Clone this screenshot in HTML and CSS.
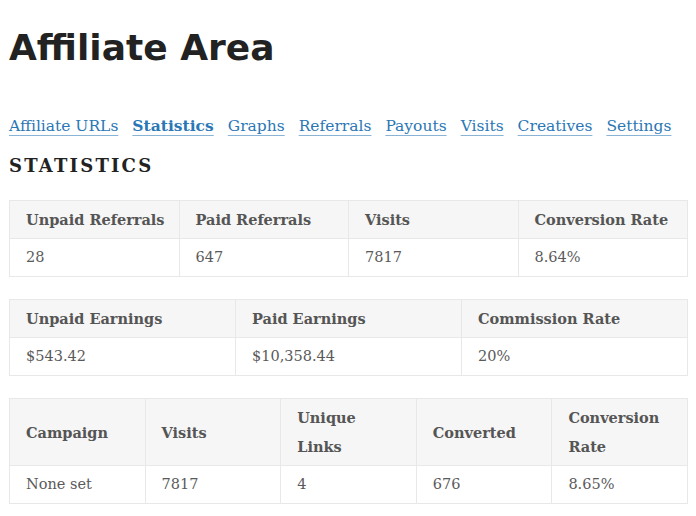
FILE: index.html
```html
<!DOCTYPE html>
<html lang="en">
<head>
  <meta charset="UTF-8" />
  <title>Affiliate Area</title>
  <link rel="stylesheet" href="styles.css">
</head>
<body>

  <h1 class="judul">Affiliate Area</h1>

  <nav class="tabs">
    <a href="#">Affiliate URLs</a>
    <a href="#" class="aktif">Statistics</a>
    <a href="#">Graphs</a>
    <a href="#">Referrals</a>
    <a href="#">Payouts</a>
    <a href="#">Visits</a>
    <a href="#">Creatives</a>
    <a href="#">Settings</a>
  </nav>

  <h2 class="sub">Statistics</h2>

  <table class="stat satu-baris">
    <thead>
      <tr>
        <th>Unpaid Referrals</th>
        <th>Paid Referrals</th>
        <th>Visits</th>
        <th>Conversion Rate</th>
      </tr>
    </thead>
    <tbody>
      <tr>
        <td>28</td>
        <td>647</td>
        <td>7817</td>
        <td>8.64%</td>
      </tr>
    </tbody>
  </table>

  <table class="stat">
    <thead>
      <tr>
        <th>Unpaid Earnings</th>
        <th>Paid Earnings</th>
        <th>Commission Rate</th>
      </tr>
    </thead>
    <tbody>
      <tr>
        <td>$543.42</td>
        <td>$10,358.44</td>
        <td>20%</td>
      </tr>
    </tbody>
  </table>

  <table class="stat">
    <thead>
      <tr>
        <th>Campaign</th>
        <th>Visits</th>
        <th>Unique Links</th>
        <th>Converted</th>
        <th>Conversion Rate</th>
      </tr>
    </thead>
    <tbody>
      <tr>
        <td>None set</td>
        <td>7817</td>
        <td>4</td>
        <td>676</td>
        <td>8.65%</td>
      </tr>
    </tbody>
  </table>

</body>
</html>
```

FILE: styles.css
```css
* { box-sizing: border-box; }

body {
  font-family: "DejaVu Serif", serif;
  margin: 0;
  padding: 0 8px 0 9px;
  background-color: #fff;
  color: #5a5a5a;
}

.judul {
  font-family: "DejaVu Sans", sans-serif;
  font-weight: bold;
  font-size: 36px;
  color: #222;
  margin: 24px 0 0;
  line-height: 48px;
}

.tabs {
  display: flex;
  gap: 14px;
  margin-top: 42px;
}

.tabs a {
  font-size: 15.5px;
  color: #2b77b5;
  text-decoration: underline;
  text-decoration-color: #8ab4d6;
  text-underline-offset: 4px;
  line-height: 24px;
}

.tabs a.aktif {
  font-weight: bold;
}

.sub {
  font-size: 18px;
  font-weight: 900;
  letter-spacing: 2.2px;
  text-transform: uppercase;
  color: #222;
  margin: 16px 0 22px;
  line-height: 24px;
}

/* tabel statistik */
.stat {
  width: 100%;
  table-layout: fixed;
  border-collapse: collapse;
  margin-bottom: 22px;
  font-size: 14.5px;
}

.stat th,
.stat td {
  border: 1px solid #e8e8e8;
  text-align: left;
  padding: 4px 16px;
  line-height: 29px;
  vertical-align: middle;
}

.stat th {
  background-color: #f6f6f6;
  font-weight: bold;
  color: #555;
}

.satu-baris th {
  white-space: nowrap;
}
```
